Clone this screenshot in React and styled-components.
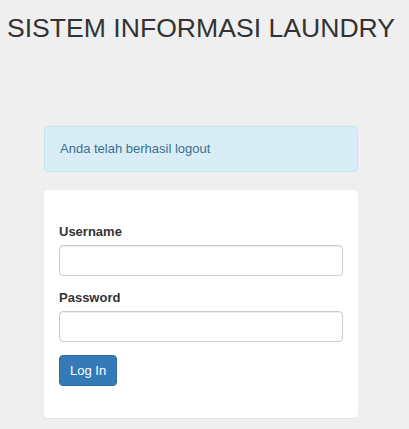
import styled, { createGlobalStyle } from "styled-components";

const GlobalStyle = createGlobalStyle`
  html, body {
    margin: 0;
    padding: 0;
    background: #efefef;
  }
  * {
    box-sizing: border-box;
  }
  body {
    font-family: "Liberation Sans", Arial, sans-serif;
    color: #333333;
  }
`;

function App() {
    return (
        <>
            <GlobalStyle />
            <Page>
                <Title>SISTEM INFORMASI LAUNDRY</Title>
                <Content>
                    <Alert>Anda telah berhasil logout</Alert>
                    <Card>
                        <Field>
                            <Label htmlFor="username">Username</Label>
                            <Input id="username" type="text" />
                        </Field>
                        <Field>
                            <Label htmlFor="password">Password</Label>
                            <Input id="password" type="password" />
                        </Field>
                        <Button type="button">Log In</Button>
                    </Card>
                </Content>
            </Page>
        </>
    )
}

export default App;

const Page = styled.div`
width: 402px;
min-height: 429px;
padding-top: 14px;
display: flex;
flex-direction: column;
align-items: center;
`;

const Title = styled.h1`
margin: 0;
font-weight: 400;
font-size: 26.6px;
line-height: 29px;
color: #333333;
text-align: center;
white-space: nowrap;
`;

const Content = styled.div`
width: 314px;
margin-top: 83px;
display: flex;
flex-direction: column;
gap: 18px;
`;

const Alert = styled.div`
padding: 14px 15px;
background-color: #d9edf7;
border: 1px solid #bce8f1;
border-radius: 4px;
color: #3a6f8e;
font-size: 13px;
line-height: 16px;
`;

const Card = styled.div`
background-color: #ffffff;
border-radius: 4px;
box-shadow: 0 1px 1px rgba(0, 0, 0, 0.05);
padding: 33px 15px 32px 15px;
display: flex;
flex-direction: column;
align-items: flex-start;
gap: 13px;
`;

const Field = styled.div`
width: 100%;
display: flex;
flex-direction: column;
gap: 4px;
`;

const Label = styled.label`
font-weight: 700;
font-size: 13px;
line-height: 18px;
color: #333333;
`;

const Input = styled.input`
width: 100%;
height: 31px;
margin: 0;
padding: 6px 11px;
border: 1px solid #cccccc;
border-radius: 4px;
background: #ffffff;
box-shadow: inset 0 1px 1px rgba(0, 0, 0, 0.075);
font-family: inherit;
font-size: 13px;
outline: none;
`;

const Button = styled.button`
height: 31px;
padding: 0 10px;
background-color: #337ab7;
border: 1px solid #2e6da4;
border-radius: 4px;
color: #ffffff;
font-family: inherit;
font-size: 13px;
line-height: 18px;
cursor: pointer;
`;
